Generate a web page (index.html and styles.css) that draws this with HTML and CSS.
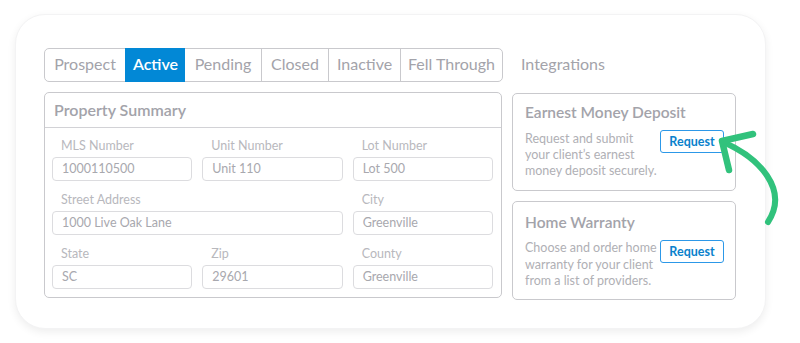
FILE: index.html
```html
<!DOCTYPE html>
<html>
<head>
<meta charset="utf-8">
<link rel="stylesheet" href="styles.css">
</head>
<body>
<div class="page">
  <div class="card">
    <div class="layout">
      <div class="tabs">
        <div class="tab t-prospect">Prospect</div>
        <div class="tab t-active active">Active</div>
        <div class="tab t-pending">Pending</div>
        <div class="tab t-closed">Closed</div>
        <div class="tab t-inactive">Inactive</div>
        <div class="tab t-fell">Fell Through</div>
      </div>
      <div class="integrations-title">Integrations</div>

      <div class="summary">
        <div class="summary-head">Property Summary</div>
        <div class="fields">
          <div class="field"><div class="label">MLS Number</div><div class="input">1000110500</div></div>
          <div class="field"><div class="label">Unit Number</div><div class="input">Unit 110</div></div>
          <div class="field"><div class="label">Lot Number</div><div class="input">Lot 500</div></div>
          <div class="field wide"><div class="label">Street Address</div><div class="input">1000 Live Oak Lane</div></div>
          <div class="field"><div class="label">City</div><div class="input">Greenville</div></div>
          <div class="field"><div class="label">State</div><div class="input">SC</div></div>
          <div class="field"><div class="label">Zip</div><div class="input">29601</div></div>
          <div class="field"><div class="label">County</div><div class="input">Greenville</div></div>
        </div>
      </div>

      <div class="integrations">
        <div class="int-card earnest">
          <div class="int-title">Earnest Money Deposit</div>
          <div class="int-body">
            <div class="int-desc">Request and submit<br>your client’s earnest<br>money deposit securely.</div>
            <div class="btn">Request</div>
          </div>
        </div>
        <div class="int-card warranty">
          <div class="int-title">Home Warranty</div>
          <div class="int-body">
            <div class="int-desc">Choose and order home<br>warranty for your client<br>from a list of providers.</div>
            <div class="btn">Request</div>
          </div>
        </div>
      </div>
    </div>
  </div>
  <svg class="arrow" width="800" height="343" viewBox="0 0 800 343">
    <path d="M723,142 C760,158 789,190 768,222" fill="none" stroke="#31c27c" stroke-width="6" stroke-linecap="round"/>
    <path d="M753,134 L722,141 L729,170" fill="none" stroke="#31c27c" stroke-width="6.5" stroke-linecap="round" stroke-linejoin="round"/>
  </svg>
</div>
</body>
</html>
```

FILE: styles.css
```css
html, body {
  margin: 0;
  padding: 0;
  background: #ffffff;
}
body {
  font-family: "Lato", "Open Sans", sans-serif;
  color: #a3a3aa;
}
.page {
  position: relative;
  width: 800px;
  height: 343px;
  padding: 14px 0 0 15px;
  box-sizing: border-box;
}
.card {
  width: 751px;
  height: 315px;
  box-sizing: border-box;
  border-radius: 30px;
  background: #ffffff;
  border: 1px solid #f3f3f4;
  box-shadow: 0 3px 8px rgba(0, 0, 0, 0.07);
  padding: 33px 0 0 28px;
}
.layout {
  display: grid;
  grid-template-columns: 459px 224px;
  column-gap: 9px;
  row-gap: 10px;
  align-items: start;
}
.tabs {
  display: flex;
  height: 34px;
  box-sizing: border-box;
  border: 1px solid #c9c9cd;
  border-radius: 5px;
}
.tab {
  box-sizing: border-box;
  display: flex;
  align-items: center;
  justify-content: center;
  padding-bottom: 3px;
  font-size: 16px;
  color: #a3a3aa;
  border-left: 1px solid #c9c9cd;
}
.t-prospect { width: 80px; border-left: none; }
.t-active { width: 60px; }
.t-pending { width: 76px; border-left: none; }
.t-closed { width: 67px; }
.t-inactive { width: 72px; }
.t-fell { width: 102px; }
.tab.active {
  background: #0288d6;
  border-left-color: #0288d6;
  color: #ffffff;
  font-weight: 600;
  margin: -1px 0;
}
.integrations-title {
  align-self: center;
  font-size: 16px;
  padding-left: 9px;
  padding-bottom: 3px;
  color: #a3a3aa;
}
.summary {
  width: 458px;
  height: 206px;
  box-sizing: border-box;
  border: 1px solid #c9c9cd;
  border-radius: 5px;
}
.summary-head {
  height: 34px;
  line-height: 34px;
  padding-left: 9px;
  font-size: 16px;
  font-weight: 600;
  color: #a3a3aa;
  border-bottom: 1px solid #d2d2d6;
}
.fields {
  display: grid;
  grid-template-columns: repeat(3, 1fr);
  column-gap: 10px;
  row-gap: 9px;
  padding: 8px 8px 0 7px;
}
.field.wide {
  grid-column: span 2;
}
.label {
  font-size: 12.5px;
  line-height: 20px;
  margin-bottom: 1px;
  padding-left: 9px;
  color: #b8b8bd;
}
.input {
  height: 24px;
  box-sizing: border-box;
  border: 1px solid #dcdcdf;
  border-radius: 4px;
  padding-left: 9px;
  font-size: 12.5px;
  line-height: 22px;
  color: #a8a8ae;
}
.integrations {
  display: flex;
  flex-direction: column;
  gap: 10px;
  margin-top: 1px;
}
.int-card {
  box-sizing: border-box;
  border: 1px solid #c9c9cd;
  border-radius: 5px;
  padding: 8px 11px 11px 12px;
}
.int-card.warranty {
  padding: 10px 11px 9px 12px;
}
.int-title {
  font-size: 15.5px;
  line-height: 20px;
  font-weight: 600;
  color: #a3a3aa;
  margin-bottom: 8px;
}
.warranty .int-title {
  margin-bottom: 7px;
}
.int-body {
  display: flex;
  justify-content: space-between;
  align-items: flex-start;
}
.int-desc {
  font-size: 12.5px;
  line-height: 16px;
  padding-top: 1px;
  color: #b0b0b5;
}
.warranty .int-desc {
  line-height: 16.5px;
}
.btn {
  width: 64px;
  height: 23px;
  box-sizing: border-box;
  border: 1px solid #2c98e8;
  border-radius: 3px;
  display: flex;
  align-items: center;
  justify-content: center;
  font-size: 12.5px;
  font-weight: 700;
  color: #0a82cc;
  margin-top: 0;
}
.warranty .btn {
  margin-top: 1px;
}
.arrow {
  position: absolute;
  left: 0;
  top: 0;
  pointer-events: none;
}
```
